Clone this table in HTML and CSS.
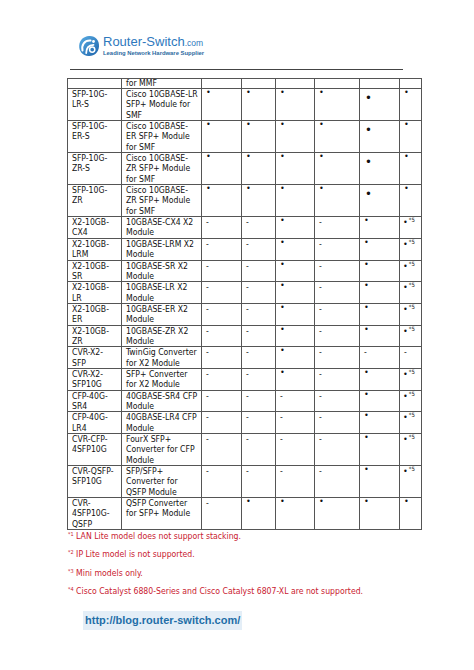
FILE: index.html
```html
<!DOCTYPE html>
<html lang="en">
<head>
<meta charset="utf-8">
<title>Router-Switch transceiver support</title>
<link rel="stylesheet" href="styles.css">
</head>
<body>
<div class="page">
  <header class="brand">
    <svg class="brand-icon" width="22" height="22" viewBox="0 0 22 22" aria-hidden="true">
      <defs>
        <linearGradient id="lg" x1="0" y1="0" x2="1" y2="1">
          <stop offset="0" stop-color="#5aaee4"/>
          <stop offset="1" stop-color="#1d63ab"/>
        </linearGradient>
      </defs>
      <path d="M11 1 C17 0.5 21.5 5 21 11.5 C20.5 17.5 16 21.5 10.5 21 C4.5 20.5 0.8 16 1.2 10.5 C1.6 5 5.5 1.4 11 1 Z" fill="url(#lg)"/>
      <path d="M4.5 15.5 C3.2 10 6.5 5.2 12.5 5.6" stroke="#fff" stroke-width="2" fill="none" stroke-linecap="round"/>
      <path d="M8.2 18 C8.2 13 10.5 10.2 15.5 9.8" stroke="#fff" stroke-width="1.8" fill="none" stroke-linecap="round"/>
      <circle cx="14.2" cy="14.6" r="2.6" fill="none" stroke="#fff" stroke-width="1.5"/>
      <circle cx="15.5" cy="6.5" r="1.4" fill="#fff"/>
    </svg>
    <div class="brand-text">
      <div class="brand-name">Router-Switch<span class="brand-com">.com</span></div>
      <div class="brand-tag">Leading Network Hardware Supplier</div>
    </div>
  </header>
  <div class="rule"></div>

  <table class="grid">
    <colgroup>
      <col class="w1"><col class="w2"><col class="w3"><col class="w4"><col class="w5"><col class="w6"><col class="w7"><col class="w8">
    </colgroup>
    <tbody>
      <tr class="top">
        <td></td><td>for MMF</td><td></td><td></td><td></td><td></td><td></td><td></td>
      </tr>
      <tr>
        <td>SFP-10G-<br>LR-S</td><td>Cisco 10GBASE-LR<br>SFP+ Module for<br>SMF</td>
        <td class="s">•</td><td class="s">•</td><td class="s">•</td><td class="s">•</td><td class="big">•</td><td class="s">•</td>
      </tr>
      <tr>
        <td>SFP-10G-<br>ER-S</td><td>Cisco 10GBASE-<br>ER SFP+ Module<br>for SMF</td>
        <td class="s">•</td><td class="s">•</td><td class="s">•</td><td class="s">•</td><td class="big">•</td><td class="s">•</td>
      </tr>
      <tr>
        <td>SFP-10G-<br>ZR-S</td><td>Cisco 10GBASE-<br>ZR SFP+ Module<br>for SMF</td>
        <td class="s">•</td><td class="s">•</td><td class="s">•</td><td class="s">•</td><td class="big">•</td><td class="s">•</td>
      </tr>
      <tr>
        <td>SFP-10G-<br>ZR</td><td>Cisco 10GBASE-<br>ZR SFP+ Module<br>for SMF</td>
        <td class="s">•</td><td class="s">•</td><td class="s">•</td><td class="s">•</td><td class="big">•</td><td class="s">•</td>
      </tr>
      <tr>
        <td>X2-10GB-<br>CX4</td><td>10GBASE-CX4 X2<br>Module</td>
        <td>-</td><td>-</td><td class="s">•</td><td>-</td><td class="s">•</td><td class="f">•<sup>*5</sup></td>
      </tr>
      <tr>
        <td>X2-10GB-<br>LRM</td><td>10GBASE-LRM X2<br>Module</td>
        <td>-</td><td>-</td><td class="s">•</td><td>-</td><td class="s">•</td><td class="f">•<sup>*5</sup></td>
      </tr>
      <tr>
        <td>X2-10GB-<br>SR</td><td>10GBASE-SR X2<br>Module</td>
        <td>-</td><td>-</td><td class="s">•</td><td>-</td><td class="s">•</td><td class="f">•<sup>*5</sup></td>
      </tr>
      <tr>
        <td>X2-10GB-<br>LR</td><td>10GBASE-LR X2<br>Module</td>
        <td>-</td><td>-</td><td class="s">•</td><td>-</td><td class="s">•</td><td class="f">•<sup>*5</sup></td>
      </tr>
      <tr>
        <td>X2-10GB-<br>ER</td><td>10GBASE-ER X2<br>Module</td>
        <td>-</td><td>-</td><td class="s">•</td><td>-</td><td class="s">•</td><td class="f">•<sup>*5</sup></td>
      </tr>
      <tr>
        <td>X2-10GB-<br>ZR</td><td>10GBASE-ZR X2<br>Module</td>
        <td>-</td><td>-</td><td class="s">•</td><td>-</td><td class="s">•</td><td class="f">•<sup>*5</sup></td>
      </tr>
      <tr>
        <td>CVR-X2-<br>SFP</td><td>TwinGig Converter<br>for X2 Module</td>
        <td>-</td><td>-</td><td class="s">•</td><td>-</td><td>-</td><td>-</td>
      </tr>
      <tr>
        <td>CVR-X2-<br>SFP10G</td><td>SFP+ Converter<br>for X2 Module</td>
        <td>-</td><td>-</td><td class="s">•</td><td>-</td><td class="s">•</td><td class="f">•<sup>*5</sup></td>
      </tr>
      <tr>
        <td>CFP-40G-<br>SR4</td><td>40GBASE-SR4 CFP<br>Module</td>
        <td>-</td><td>-</td><td>-</td><td>-</td><td class="s">•</td><td class="f">•<sup>*5</sup></td>
      </tr>
      <tr>
        <td>CFP-40G-<br>LR4</td><td>40GBASE-LR4 CFP<br>Module</td>
        <td>-</td><td>-</td><td>-</td><td>-</td><td class="s">•</td><td class="f">•<sup>*5</sup></td>
      </tr>
      <tr>
        <td>CVR-CFP-<br>4SFP10G</td><td>FourX SFP+<br>Converter for CFP<br>Module</td>
        <td>-</td><td>-</td><td>-</td><td>-</td><td class="s">•</td><td class="f">•<sup>*5</sup></td>
      </tr>
      <tr>
        <td>CVR-QSFP-<br>SFP10G</td><td>SFP/SFP+<br>Converter for<br>QSFP Module</td>
        <td>-</td><td>-</td><td>-</td><td>-</td><td class="s">•</td><td class="f">•<sup>*5</sup></td>
      </tr>
      <tr>
        <td>CVR-<br>4SFP10G-<br>QSFP</td><td>QSFP Converter<br>for SFP+ Module</td>
        <td>-</td><td class="s">•</td><td class="s">•</td><td class="s">•</td><td class="s">•</td><td class="s">•</td>
      </tr>
    </tbody>
  </table>

  <div class="notes">
    <p><sup>*1</sup> LAN Lite model does not support stacking.</p>
    <p><sup>*2</sup> IP Lite model is not supported.</p>
    <p><sup>*3</sup> Mini models only.</p>
    <p><sup>*4</sup> Cisco Catalyst 6880-Series and Cisco Catalyst 6807-XL are not supported.</p>
  </div>

  <div class="blog"><span class="blog-link">http://blog.router-switch.com/</span></div>
</div>
</body>
</html>
```

FILE: styles.css
```css
html, body {
  margin: 0;
  padding: 0;
  background: #ffffff;
}

.page {
  width: 474px;
  padding-top: 35px;
  font-family: "DejaVu Sans Condensed", "DejaVu Sans", sans-serif;
  font-stretch: condensed;
  color: #111111;
}

/* header / logo */
.brand {
  display: flex;
  align-items: center;
  gap: 3px;
  margin-left: 78px;
  height: 22px;
}

.brand-icon {
  flex: none;
  display: block;
}

.brand-text {
  display: flex;
  flex-direction: column;
  font-family: "Liberation Sans", Arial, sans-serif;
  font-stretch: normal;
}

.brand-name {
  font-size: 13px;
  line-height: 13px;
  color: #2e78bd;
}

.brand-com {
  font-size: 8.5px;
}

.brand-tag {
  font-size: 5.9px;
  line-height: 7px;
  font-weight: 700;
  color: #2d6a9f;
}

.rule {
  margin: 12px 0 8px 70px;
  width: 333px;
  height: 0;
  border-top: 1px solid #444444;
}

/* table */
.grid {
  margin-left: 67px;
  width: 354px;
  border-collapse: collapse;
  table-layout: fixed;
  font-size: 8.6px;
  line-height: 10.35px;
}

.w1 { width: 54px; }
.w2 { width: 80px; }
.w3 { width: 40px; }
.w4 { width: 34px; }
.w5 { width: 39px; }
.w6 { width: 45px; }
.w7 { width: 40px; }
.w8 { width: 22px; }

.grid td {
  border: 1px solid #555555;
  padding: 0 0 0 4px;
  vertical-align: top;
  white-space: nowrap;
  overflow: hidden;
}

.grid .top td {
  line-height: 9px;
}

.grid td.s {
  font-size: 9px;
  line-height: 7px;
  padding-left: 4px;
}

.grid td.big {
  font-size: 13px;
  line-height: 18px;
  padding-left: 5px;
}

.grid td.f {
  font-size: 9px;
  padding-left: 3px;
}

.grid td.f sup {
  font-size: 6px;
  line-height: 0;
  vertical-align: 3px;
  margin-left: 1px;
}

/* footnotes */
.notes {
  margin: 0 0 0 68px;
  color: #c9202f;
}

.notes p {
  margin: 0 0 6.3px;
  font-size: 8.65px;
  line-height: 12px;
}

.notes sup {
  font-size: 5.5px;
  line-height: 0;
  vertical-align: 3px;
}

/* blog link */
.blog {
  margin: 12px 0 0 83px;
}

.blog-link {
  display: inline-block;
  padding: 2px 2px 3px;
  background: #e4eef7;
  color: #1f6ea8;
  font-family: "Liberation Sans", Arial, sans-serif;
  font-stretch: normal;
  font-weight: 700;
  font-size: 11px;
  line-height: 14px;
}
```
